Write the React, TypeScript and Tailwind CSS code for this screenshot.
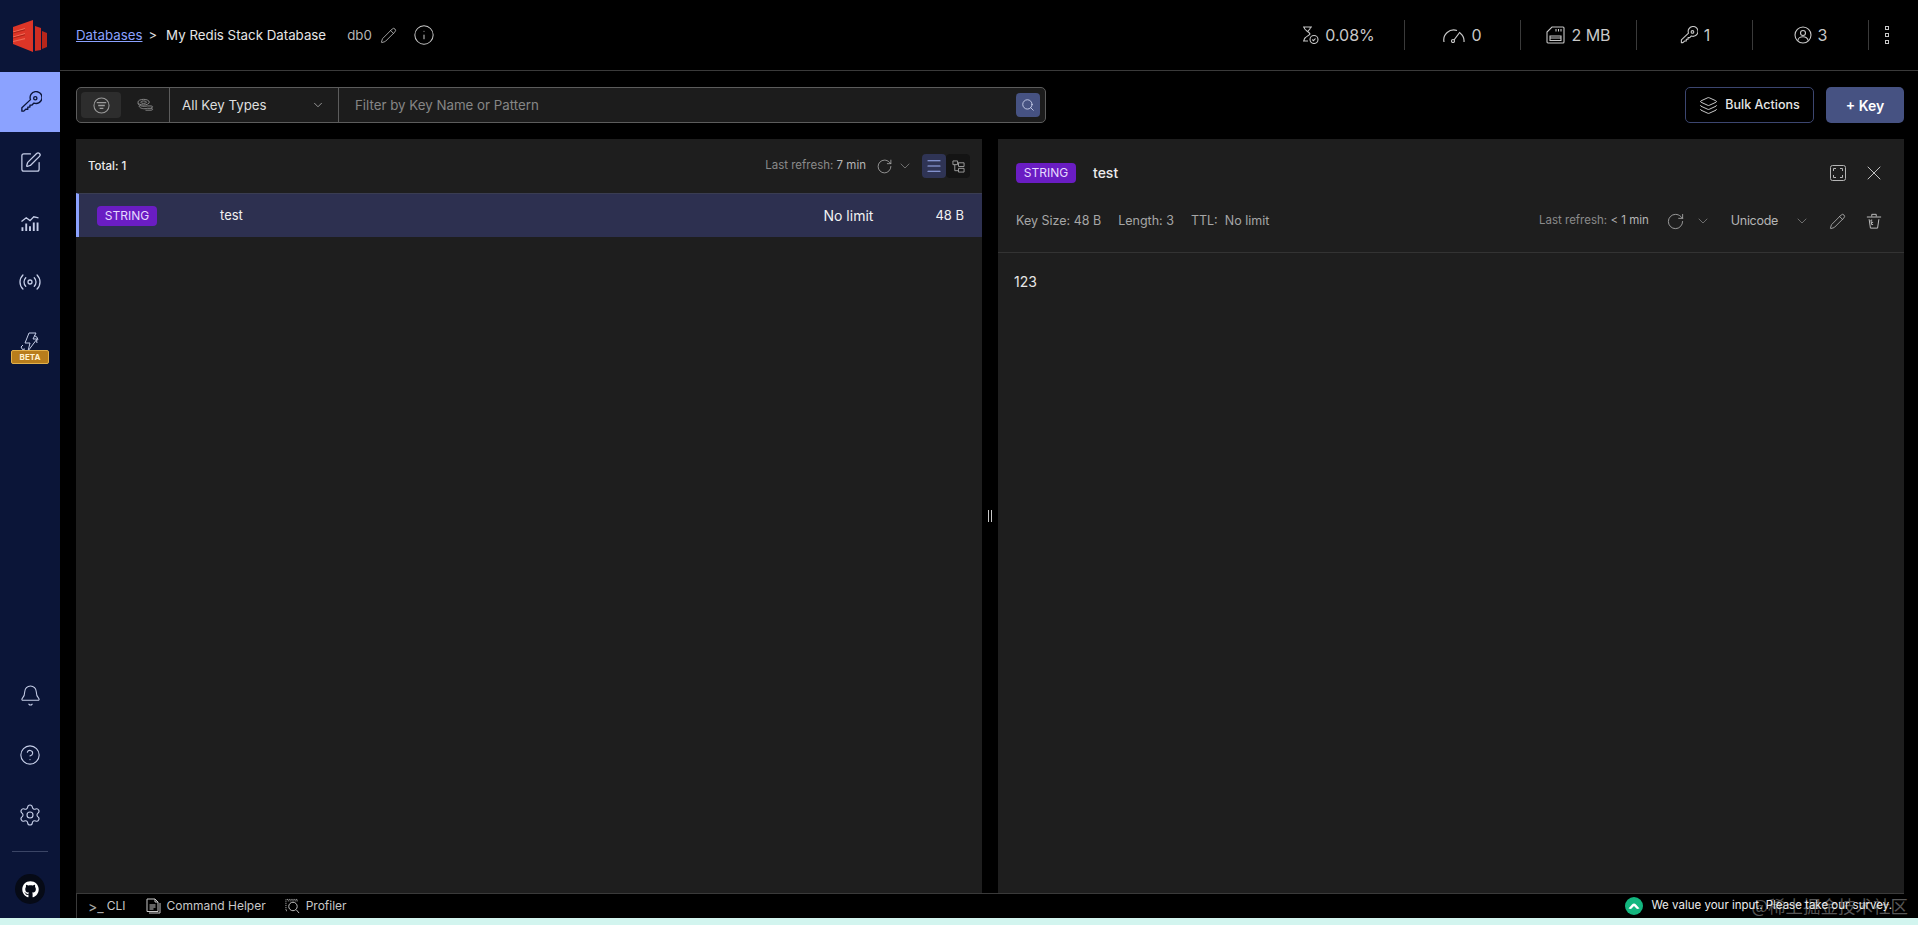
import React from 'react'
import { Bell, ChevronDown, CircleHelp, Info, Layers, Menu, Pencil, Radio, RotateCw, Search, Settings, SquarePen, X } from 'lucide-react'
import { FaGithub } from 'react-icons/fa'

const KeyIcon = ({ className }: { className?: string }) => (
  <svg viewBox="0 0 24 24" fill="none" stroke="currentColor" strokeWidth="1.4" className={className}>
    <path d="M3 17.500 12 9a6.200 6.200 0 1 1 3.600 3.600l-2 2.100h-2.200v2.100H9.200v2.200H7L5 21H3z" strokeLinejoin="round" />
    <circle cx="17" cy="7.500" r="1.700" />
  </svg>
)

const HourglassIcon = () => (
  <svg viewBox="0 0 17 18" fill="none" stroke="currentColor" strokeWidth="1.100" className="h-[18px] w-[17px]">
    <path d="M1 1h9M1 15h5M2 1c0 4 5 4 6 7-1 1.500-3 2-5 4-1 1-1 2-1 3M8.500 1c0 2-1 3-2.500 4" />
    <circle cx="12" cy="13.500" r="4" />
    <path d="m10.300 13.500 1.200 1.200 2-2.200" />
  </svg>
)

const SpeedIcon = () => (
  <svg viewBox="0 0 22 15" fill="none" stroke="currentColor" strokeWidth="1.200" className="h-[15px] w-[22px]">
    <path d="M1 14A10 10 0 0 1 14 2.500M17 5a10 10 0 0 1 4 9" />
    <circle cx="10" cy="13" r="1.500" />
    <path d="m11 12 6-8" />
  </svg>
)

const CardIcon = () => (
  <svg viewBox="0 0 19 18" fill="none" stroke="currentColor" strokeWidth="1.100" className="h-[18px] w-[19px]">
    <path d="M6 1h11a1 1 0 0 1 1 1v14a1 1 0 0 1-1 1H2a1 1 0 0 1-1-1V6z" />
    <path d="M10 3v2.500M12.500 3v2.500M15 3v2.500M4 10h11v4.500H4zM4 12h11" />
  </svg>
)

const UserIcon = () => (
  <svg viewBox="0 0 18 18" fill="none" stroke="currentColor" strokeWidth="1.100" className="h-[18px] w-[18px]">
    <circle cx="9" cy="9" r="8" />
    <circle cx="9" cy="7" r="2.500" />
    <path d="M4 14.500c0-5 10-5 10 0" />
  </svg>
)

const TrashIcon = ({ className }: { className?: string }) => (
  <svg viewBox="0 0 18 18" fill="none" stroke="currentColor" strokeWidth="1.100" className={className}>
    <path d="M1 4.500h16M6.500 4V1.500h5V4M3.500 7l1.500 10h8l1.500-10M7 8H5.500l.8 5H8M6 10.500h2" />
  </svg>
)

const ChartIcon = () => (
  <svg viewBox="0 0 20 18" fill="none" stroke="currentColor" strokeWidth="1.400" className="h-[17px] w-[20px]">
    <path d="m1 8 5-4 4 3 4-4 5 1" />
    <path d="M2 14v4M6 10v8M10 13v5M14 9v9M18 9v9" strokeWidth="2" />
  </svg>
)

const BoltIcon = () => (
  <svg viewBox="0 0 20 20" fill="none" stroke="currentColor" strokeWidth="1" className="h-[20px] w-[20px]">
    <path d="M9 1h7l-3 6h4L8 19l2-8H5z" strokeLinejoin="round" />
    <path d="M14 3.500a5 5 0 0 1 4 4l-1.500 1 .5 2.500M3 13l-2 2 1.500 2.500L5 17" />
  </svg>
)

const RedisLogo = () => (
  <svg viewBox="0 0 34 32" className="h-[32px] w-[34px]">
    <path d="M0 7 20 0v32L0 24z" fill="#dc3527" />
    <path d="M0 11.500 12 8v1.200L0 12.500zM0 16.500 12 13v1.200L0 17.500zM0 21l12-3v1.200L0 22z" fill="#f06a55" />
    <path d="M0 12.500 12 9.200v1L0 13.500zM0 17.500l12-3.300v1L0 18.500z" fill="#a82418" />
    <path d="M22 6l6 2v22l-6 1z" fill="#cf2d22" />
    <path d="M29 11l5 2v14l-5 2z" fill="#b8261b" />
  </svg>
)

const FilterIcon = () => (
  <svg viewBox="0 0 18 18" fill="none" stroke="currentColor" strokeWidth="1.100" className="h-[17px] w-[17px]">
    <circle cx="9" cy="9" r="8" />
    <path d="M4 6h10M5.500 9h7M7 12h4" strokeWidth="1.400" />
  </svg>
)

const StackIcon = () => (
  <svg viewBox="0 0 18 14" fill="none" stroke="currentColor" strokeWidth="1" className="h-[14px] w-[17px]">
    <ellipse cx="7" cy="4" rx="6" ry="3" />
    <ellipse cx="7" cy="4" rx="3" ry="1.300" />
    <path d="M1 5c0 3 6 4 10 3h4c2 0 2 2 0 2M2 8c1 3 6 3.500 9 2.500h4c2 0 2 2 0 2h-6" />
  </svg>
)

const TreeIcon = () => (
  <svg viewBox="0 0 14 14" fill="none" stroke="currentColor" strokeWidth="1" className="h-[13px] w-[13px]">
    <path d="M1 1h5v4H1zM6.500 3H13v4H7V3M3 5v6.500h4M7 9h6v4H7z" />
  </svg>
)

const ExpandIcon = () => (
  <svg viewBox="0 0 16 16" fill="none" stroke="currentColor" strokeWidth="1" className="h-[16px] w-[16px]">
    <rect x="0.500" y="0.500" width="15" height="15" rx="2" />
    <path d="M3.500 6V3.500H6M10 3.500h2.500V6M12.500 10v2.500H10M6 12.500H3.500V10" />
  </svg>
)

const DocIcon = () => (
  <svg viewBox="0 0 15 16" fill="none" stroke="currentColor" strokeWidth="1" className="h-[16px] w-[15px]">
    <path d="M1 1h8l3 3v9.500H1zM9 1v3h3M3.500 7h6M3.500 9h6M3.500 11h4M14 5v10H3" />
  </svg>
)

const ProfilerIcon = () => (
  <svg viewBox="0 0 16 16" fill="none" stroke="currentColor" strokeWidth="1" className="h-[16px] w-[15px]">
    <path d="M1 4V1h12v3M1 5v8h2M3 2.500h9" strokeDasharray="1 1" />
    <circle cx="8.500" cy="8.500" r="4.500" />
    <path d="m12 12 3 3.500" />
  </svg>
)

const SurveyIcon = () => (
  <svg viewBox="0 0 18 18" className="h-[18px] w-[18px]">
    <circle cx="9" cy="9" r="9" fill="#13b67f" />
    <path d="M3.500 11.500 7 7.500c1-1.200 3-1.200 4 0l3.500 4-2.500.5L9 9l-3 3z" fill="#ffffff" />
  </svg>
)

const NavItem = ({ active, children }: { active?: boolean; children: React.ReactNode }) => (
  <div className={`flex h-[60px] items-center justify-center ${active ? 'bg-[#8ba2ff] text-[#0b1538]' : 'text-[#c6cee8]'}`}>
    {children}
  </div>
)

const Metric = ({ icon, value, className }: { icon: React.ReactNode; value: string; className?: string }) => (
  <div className={`flex h-[30px] w-[116px] items-center justify-center gap-[6px] border-r border-[#3a3a3a] text-[16px] text-[#c8c8c8] ${className ?? ''}`}>
    {icon}
    <span>{value}</span>
  </div>
)

const StringBadge = () => (
  <span className="flex h-[20px] w-[60px] items-center justify-center rounded-[4px] bg-[#6a1dc3] text-[12px] text-[#e6d9ff]">
    STRING
  </span>
)

const RefreshInfo = ({ age }: { age: string }) => (
  <span className="text-[11.5px] text-[#8a8a8a]">
    Last refresh: <span className="text-[#b5b5b5]">{age}</span>
  </span>
)

export default function App() {
  return (
    <div className="flex h-[925px] w-[1918px] flex-col overflow-hidden bg-black font-['Inter','Liberation_Sans',sans-serif]">
      <div className="flex h-[918px] min-h-0">
        {/* sidebar */}
        <aside className="flex w-[60px] shrink-0 flex-col bg-[#0b1538]">
          <div className="flex h-[72px] items-center justify-center">
            <RedisLogo />
          </div>
          <NavItem active>
            <KeyIcon className="h-[23px] w-[23px]" />
          </NavItem>
          <NavItem>
            <SquarePen className="h-[23px] w-[23px]" strokeWidth={1.3} />
          </NavItem>
          <NavItem>
            <ChartIcon />
          </NavItem>
          <NavItem>
            <Radio className="h-[24px] w-[24px]" strokeWidth={1.3} />
          </NavItem>
          <div className="relative flex h-[60px] items-start justify-center pt-[20px] text-[#c6cee8]">
            <BoltIcon />
            <span className="absolute left-[11px] top-[38px] flex h-[14px] w-[38px] items-center justify-center rounded-[2px] border border-[#e2b04a] bg-[#b87d1c] text-[8px] font-bold text-[#fff2d0]">
              BETA
            </span>
          </div>
          <div className="mt-auto">
            <NavItem>
              <Bell className="h-[23px] w-[23px]" strokeWidth={1.1} />
            </NavItem>
            <NavItem>
              <CircleHelp className="h-[22px] w-[22px]" strokeWidth={1.2} />
            </NavItem>
            <NavItem>
              <Settings className="h-[24px] w-[24px]" strokeWidth={1.1} />
            </NavItem>
            <div className="mx-[12px] mt-[6px] border-t border-[#3b4566]" />
            <div className="flex h-[66px] items-start justify-center pt-[22px]">
              <span className="flex h-[30px] w-[30px] items-center justify-center rounded-full bg-[#060a16] text-white">
                <FaGithub className="h-[17px] w-[17px]" />
              </span>
            </div>
          </div>
        </aside>

        <div className="flex min-w-0 flex-1 flex-col">
          {/* header */}
          <header className="flex h-[71px] shrink-0 items-center border-b border-[#3a3a3a] pl-[16px] text-[13.300px]">
            <a className="pt-[1px] text-[#8ba2ff] underline">Databases</a>
            <span className="ml-[6px] pt-[1px] text-[13px] text-[#e0e0e0]">&gt;</span>
            <span className="ml-[9px] pt-[1px] text-[#e6e6e6]">My Redis Stack Database</span>
            <span className="ml-[21px] pt-[1px] text-[#b5b5b5]">db0</span>
            <Pencil className="ml-[8px] h-[17px] w-[17px] text-[#c8c8c8]" strokeWidth={1.1} />
            <Info className="ml-[16px] h-[22px] w-[22px] text-[#c8c8c8]" strokeWidth={1.1} />
            <div className="ml-auto flex items-center pr-[13px]">
              <Metric icon={<HourglassIcon />} value="0.08%" className="pr-[16px]" />
              <Metric icon={<SpeedIcon />} value="0" />
              <Metric icon={<CardIcon />} value="2 MB" />
              <Metric icon={<KeyIcon className="h-[19px] w-[19px]" />} value="1" />
              <Metric icon={<UserIcon />} value="3" />
              <div className="flex w-[36px] flex-col items-center gap-[3px]">
                <span className="h-[4px] w-[4px] border border-[#c8c8c8]" />
                <span className="h-[4px] w-[4px] border border-[#c8c8c8]" />
                <span className="h-[4px] w-[4px] border border-[#c8c8c8]" />
              </div>
            </div>
          </header>

          <div className="flex min-h-0 flex-1 flex-col pl-[16px] pr-[14px]">
            {/* toolbar */}
            <div className="mt-[16px] flex h-[36px] shrink-0 items-stretch">
              <div className="flex w-[970px] items-stretch rounded-[5px] border border-[#5c5c5c] bg-[#1c1c1c]">
                <div className="flex w-[93px] items-center gap-[4px] border-r border-[#5c5c5c] pl-[4px]">
                  <span className="flex h-[26px] w-[40px] items-center justify-center rounded-[4px] bg-[#2d2d2d] text-[#9a9a9a]">
                    <FilterIcon />
                  </span>
                  <span className="flex w-[40px] items-center justify-center text-[#8a8a8a]">
                    <StackIcon />
                  </span>
                </div>
                <div className="flex w-[169px] items-center justify-between border-r border-[#5c5c5c] pl-[12px] pr-[13px] text-[13.300px] text-[#dedede]">
                  <span className="pt-[1px]">All Key Types</span>
                  <ChevronDown className="h-[14px] w-[14px] text-[#b0b0b0]" strokeWidth={1.4} />
                </div>
                <div className="flex flex-1 items-center justify-between pl-[16px] pr-[5px] text-[13.300px] text-[#868686]">
                  <span className="pt-[1px]">Filter by Key Name or Pattern</span>
                  <span className="flex h-[24px] w-[24px] items-center justify-center rounded-[4px] bg-[#465282] text-[#d5dcf5]">
                    <Search className="h-[14px] w-[14px]" strokeWidth={1.4} />
                  </span>
                </div>
              </div>
              <button className="ml-auto flex w-[129px] items-center justify-center gap-[7px] rounded-[5px] border border-[#3c4670] text-[12.500px] font-medium whitespace-nowrap text-[#e6e6e6]">
                <Layers className="h-[19px] w-[19px]" strokeWidth={1.1} />
                Bulk Actions
              </button>
              <button className="ml-[12px] w-[78px] rounded-[5px] bg-[#465282] text-[14px] font-semibold text-white">
                + Key
              </button>
            </div>

            {/* panels */}
            <div className="mt-[16px] flex min-h-0 flex-1">
              <section className="flex w-[906px] flex-col bg-[#1e1e1e]">
                <div className="flex h-[54px] shrink-0 items-center pl-[12px] pr-[12px]">
                  <span className="pt-[2px] text-[11.500px] font-medium text-[#ececec]">Total: 1</span>
                  <div className="ml-auto flex items-center">
                    <RefreshInfo age="7 min" />
                    <RotateCw className="ml-[10px] h-[17px] w-[17px] text-[#b0b0b0]" strokeWidth={1.1} />
                    <ChevronDown className="ml-[4px] h-[16px] w-[16px] text-[#8a8a8a]" strokeWidth={1.1} />
                    <span className="ml-[9px] flex h-[24px] w-[24px] items-center justify-center rounded-[4px] bg-[#2f3455] text-[#9fb0f5]">
                      <Menu className="h-[18px] w-[18px]" strokeWidth={1.6} />
                    </span>
                    <span className="flex h-[24px] w-[24px] items-center justify-center rounded-[4px] bg-[#141414] text-[#a0a0a0]">
                      <TreeIcon />
                    </span>
                  </div>
                </div>
                <div className="flex h-[44px] shrink-0 items-center border-l-[3px] border-t border-[#8ba2ff] border-t-[#3a3d52] bg-[#2d3050] pl-[18px] pr-[18px] text-[14px] text-[#f2f2f2]">
                  <StringBadge />
                  <span className="ml-[63px] pt-[1px] text-[13px]">test</span>
                  <span className="ml-auto">No limit</span>
                  <span className="ml-[62px] text-[13px]">48 B</span>
                </div>
              </section>

              <div className="flex w-[16px] shrink-0 items-center justify-center gap-[2px]">
                <span className="h-[12px] w-[1px] bg-[#c8c8c8]" />
                <span className="h-[12px] w-[1px] bg-[#c8c8c8]" />
              </div>

              <section className="flex flex-1 flex-col bg-[#1e1e1e]">
                <div className="flex h-[114px] shrink-0 flex-col border-b border-[#333333] pl-[18px] pr-[18px]">
                  <div className="flex h-[68px] shrink-0 items-center">
                    <StringBadge />
                    <span className="ml-[17px] pb-[1px] text-[14px] font-medium text-[#ececec]">test</span>
                    <span className="ml-auto text-[#b5b5b5]">
                      <ExpandIcon />
                    </span>
                    <X className="ml-[16px] h-[24px] w-[24px] text-[#c0c0c0]" strokeWidth={1} />
                  </div>
                  <div className="flex h-[28px] items-center pr-[4px] text-[12.500px] text-[#a6a6a6]">
                    <span>Key Size: 48 B</span>
                    <span className="ml-[17px]">Length: 3</span>
                    <span className="ml-[17px]">TTL:&nbsp; No limit</span>
                    <div className="ml-auto flex items-center">
                      <RefreshInfo age="< 1 min" />
                      <RotateCw className="ml-[17px] h-[19px] w-[19px] text-[#b8b8b8]" strokeWidth={1} />
                      <ChevronDown className="ml-[10px] h-[16px] w-[16px] text-[#8a8a8a]" strokeWidth={1.1} />
                      <span className="ml-[20px] text-[12.500px] tracking-[-0.3px] text-[#b5b5b5]">Unicode</span>
                      <ChevronDown className="ml-[16px] h-[16px] w-[16px] text-[#8a8a8a]" strokeWidth={1.1} />
                      <Pencil className="ml-[19px] h-[17px] w-[17px] text-[#c0c0c0]" strokeWidth={1.1} />
                      <TrashIcon className="ml-[20px] h-[16px] w-[16px] text-[#c0c0c0]" />
                    </div>
                  </div>
                </div>
                <div className="pl-[16px] pt-[18px] text-[14px] text-[#e6e6e6]">123</div>
              </section>
            </div>

            {/* bottom bar */}
            <footer className="relative flex h-[25px] shrink-0 items-center border-l border-t border-[#3a3a3a] pl-[11px] pr-[12px] text-[12px] text-[#c8c8c8]">
              <span className="text-[14px] text-[#a8a8a8]">&gt;_</span>
              <span className="ml-[3px]">CLI</span>
              <span className="ml-[21px]"><DocIcon /></span>
              <span className="ml-[5px]">Command Helper</span>
              <span className="ml-[19px]"><ProfilerIcon /></span>
              <span className="ml-[6px]">Profiler</span>
              <div className="ml-auto flex items-center gap-[8px] text-[11.500px] text-[#ececec]">
                <SurveyIcon />
                We value your input. Please take our survey.
              </div>
              <span className="absolute right-[-4px] top-[3px] font-['Noto_Sans_CJK_SC',sans-serif] text-[17.500px] leading-none text-[#ffffff]/35">
                @稀土掘金技术社区
              </span>
            </footer>
          </div>
        </div>
      </div>
      <div className="h-[7px] shrink-0 bg-[#d2f5ef]" />
    </div>
  )
}
